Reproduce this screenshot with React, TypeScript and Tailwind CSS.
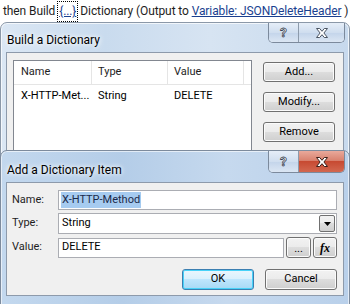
import React from 'react';

const font = { fontFamily: 'Roboto, "Liberation Sans", sans-serif' };

function WinButton({ children, className = '' }: { children: React.ReactNode; className?: string }) {
    return (
        <div
            className={`flex items-center justify-center rounded-[3px] border border-[#707070] bg-[linear-gradient(#f2f2f2_0%,#ebebeb_49%,#dddddd_50%,#cfcfcf_100%)] text-[11px] text-black shadow-[inset_0_0_0_1px_#fbfbfb] ${className}`}
        >
            {children}
        </div>
    );
}

function CaptionButtons({ active, h }: { active: boolean; h: string }) {
    return (
        <div className={`flex ${h} overflow-hidden rounded-b-[5px] border border-t-0 border-[#7c8a9c] shadow-[inset_0_0_0_1px_rgba(255,255,255,0.6)]`}>
            <div className="flex w-[30px] items-center justify-center border-r border-[#8c9aab] bg-[linear-gradient(#e6eef8,#d0deef_50%,#c3d4ea_51%,#dbe6f3)]">
                <span className="text-[13px] font-bold leading-none text-white [-webkit-text-stroke:0.8px_#3b4453]">?</span>
            </div>
            <div
                className={`flex w-[45px] items-center justify-center ${
                    active
                        ? 'bg-[linear-gradient(#e9a99b,#d9826f_45%,#c74a32_50%,#d26850)]'
                        : 'bg-[linear-gradient(#e6eef8,#d0deef_50%,#c3d4ea_51%,#dbe6f3)]'
                }`}
            >
                <svg width="14" height="12" viewBox="0 0 14 12">
                    <path
                        d="M1.5 1.5h3.2L7 4.3 9.3 1.5h3.2L8.9 6l3.6 4.5H9.3L7 7.7 4.7 10.5H1.5L5.1 6z"
                        fill="#fff"
                        stroke={active ? '#3a1e18' : '#4b5563'}
                        strokeWidth="1"
                        strokeLinejoin="round"
                    />
                </svg>
            </div>
        </div>
    );
}

function Field({ label, children }: { label: string; children: React.ReactNode }) {
    return (
        <div className="flex items-center">
            <span className="w-[46px] text-[11px] text-[#1e1e1e]">{label}</span>
            {children}
        </div>
    );
}

export default function App() {
    return (
        <div className="relative h-[304px] w-[350px] overflow-hidden bg-white" style={font}>
            {/* expression line */}
            <div className="flex h-[22px] items-center whitespace-nowrap pl-[3px] text-[12px] tracking-[-0.1px] text-[#1e1e1e]">
                <span>then Build</span>
                <span className="mx-[2px] flex h-[21px] items-center border border-dotted border-black px-[1px] text-[#1a3f8f] underline">
                    {'{...}'}
                </span>
                <span>Dictionary (Output to&nbsp;</span>
                <span className="text-[#1a3f8f] underline">Variable: JSONDeleteHeader</span>
                <span>&nbsp;)</span>
            </div>

            {/* Build a Dictionary window */}
            <div className="h-[282px] rounded-tl-[7px] rounded-tr-[7px] border border-[#8b98a8] bg-[linear-gradient(90deg,#dbe7f4,#c9dbee_30%,#d7e4f2_60%,#c7d9ed)] shadow-[inset_0_0_0_1px_rgba(255,255,255,0.7)]">
                <div className="flex h-[29px] items-start justify-between pl-[6px] pr-[4px]">
                    <span className="mt-[8px] text-[12px] text-black [text-shadow:0_0_6px_#fff,0_0_4px_#fff]">
                        Build a Dictionary
                    </span>
                    <CaptionButtons active={false} h="h-[20px]" />
                </div>
                <div className="mx-[5px] flex h-[260px] gap-[11px] border border-[#8d9aab] bg-[#f0f0f0] pl-[6px] pt-[7px]">
                    <div className="h-[240px] w-[239px] border border-[#828790] bg-white">
                        <div className="flex h-[24px] items-center border-b border-[#e5e5e5] text-[11px] text-[#1e1e1e]">
                            <span className="flex h-full w-[78px] items-center border-r border-[#e5e5e5] pl-[7px]">Name</span>
                            <span className="flex h-full w-[76px] items-center border-r border-[#e5e5e5] pl-[6px]">Type</span>
                            <span className="flex h-full w-[76px] items-center border-r border-[#e5e5e5] pl-[6px]">Value</span>
                        </div>
                        <div className="flex h-[22px] items-center whitespace-nowrap text-[11px] text-black">
                            <span className="w-[78px] pl-[7px]">X-HTTP-Met...</span>
                            <span className="w-[76px] pl-[6px]">String</span>
                            <span className="w-[76px] pl-[6px]">DELETE</span>
                        </div>
                    </div>
                    <div className="flex flex-col gap-[10px] pt-[2px]">
                        <WinButton className="h-[20px] w-[72px]">Add...</WinButton>
                        <WinButton className="h-[20px] w-[72px]">Modify...</WinButton>
                        <WinButton className="h-[20px] w-[72px]">Remove</WinButton>
                    </div>
                </div>
            </div>

            {/* Add a Dictionary Item window, lying over the first */}
            <div className="absolute left-0 top-[150px] flex h-[156px] w-[350px] flex-col rounded-t-[7px] border border-[#7d8b9d] bg-[linear-gradient(90deg,#c3d8ee,#b4cde8_35%,#c6d9ee_65%,#b9d0ea)] shadow-[inset_0_0_0_1px_rgba(255,255,255,0.6)]">
                <div className="flex h-[31px] items-start justify-between pl-[6px] pr-[4px]">
                    <span className="mt-[10px] text-[12px] text-black [text-shadow:0_0_6px_#fff,0_0_4px_#fff]">
                        Add a Dictionary Item
                    </span>
                    <CaptionButtons active h="h-[22px]" />
                </div>
                <div className="mx-[5px] flex h-[114px] flex-col gap-[3px] border border-[#8d9aab] bg-[#f0f0f0] pl-[5px] pr-[6px] pt-[7px]">
                    <Field label="Name:">
                        <div className="flex h-[20px] flex-1 items-center border border-[#abadb3] bg-white pl-[2px] text-[11px]">
                            <span className="bg-[#a6cbf0] px-[1px] text-[#1b2a4a]">X-HTTP-Method</span>
                        </div>
                    </Field>
                    <Field label="Type:">
                        <div className="flex h-[21px] flex-1 items-center justify-between border border-[#abadb3] bg-white pl-[3px] pr-[1px] text-[11px]">
                            <span>String</span>
                            <div className="flex h-[17px] w-[16px] items-center justify-center rounded-[2px] border border-[#707070] bg-[linear-gradient(#f2f2f2,#ebebeb_49%,#dddddd_50%,#cfcfcf)]">
                                <svg width="7" height="4" viewBox="0 0 7 4">
                                    <path d="M0 0h7L3.5 4z" fill="#000" />
                                </svg>
                            </div>
                        </div>
                    </Field>
                    <Field label="Value:">
                        <div className="flex flex-1 items-center gap-[2px]">
                            <div className="flex h-[20px] flex-1 items-center border border-[#abadb3] bg-white pl-[3px] text-[11px]">
                                DELETE
                            </div>
                            <WinButton className="h-[21px] w-[25px] items-end pb-[3px] text-[11px] leading-none">...</WinButton>
                            <WinButton className="h-[21px] w-[24px]">
                                <span className="font-['Liberation_Serif'] text-[12px] font-bold italic">fx</span>
                            </WinButton>
                        </div>
                    </Field>
                    <div className="mt-[8px] flex justify-end gap-[11px]">
                        <div className="flex h-[21px] w-[72px] items-center justify-center rounded-[3px] border border-[#3c7fb1] bg-[linear-gradient(#eaf6fd,#d9f0fc_49%,#bee6fd_50%,#a7d9f5)] text-[11px] shadow-[inset_0_0_0_1px_#48d2f8]">
                            OK
                        </div>
                        <WinButton className="h-[21px] w-[72px]">Cancel</WinButton>
                    </div>
                </div>
            </div>
        </div>
    );
}
